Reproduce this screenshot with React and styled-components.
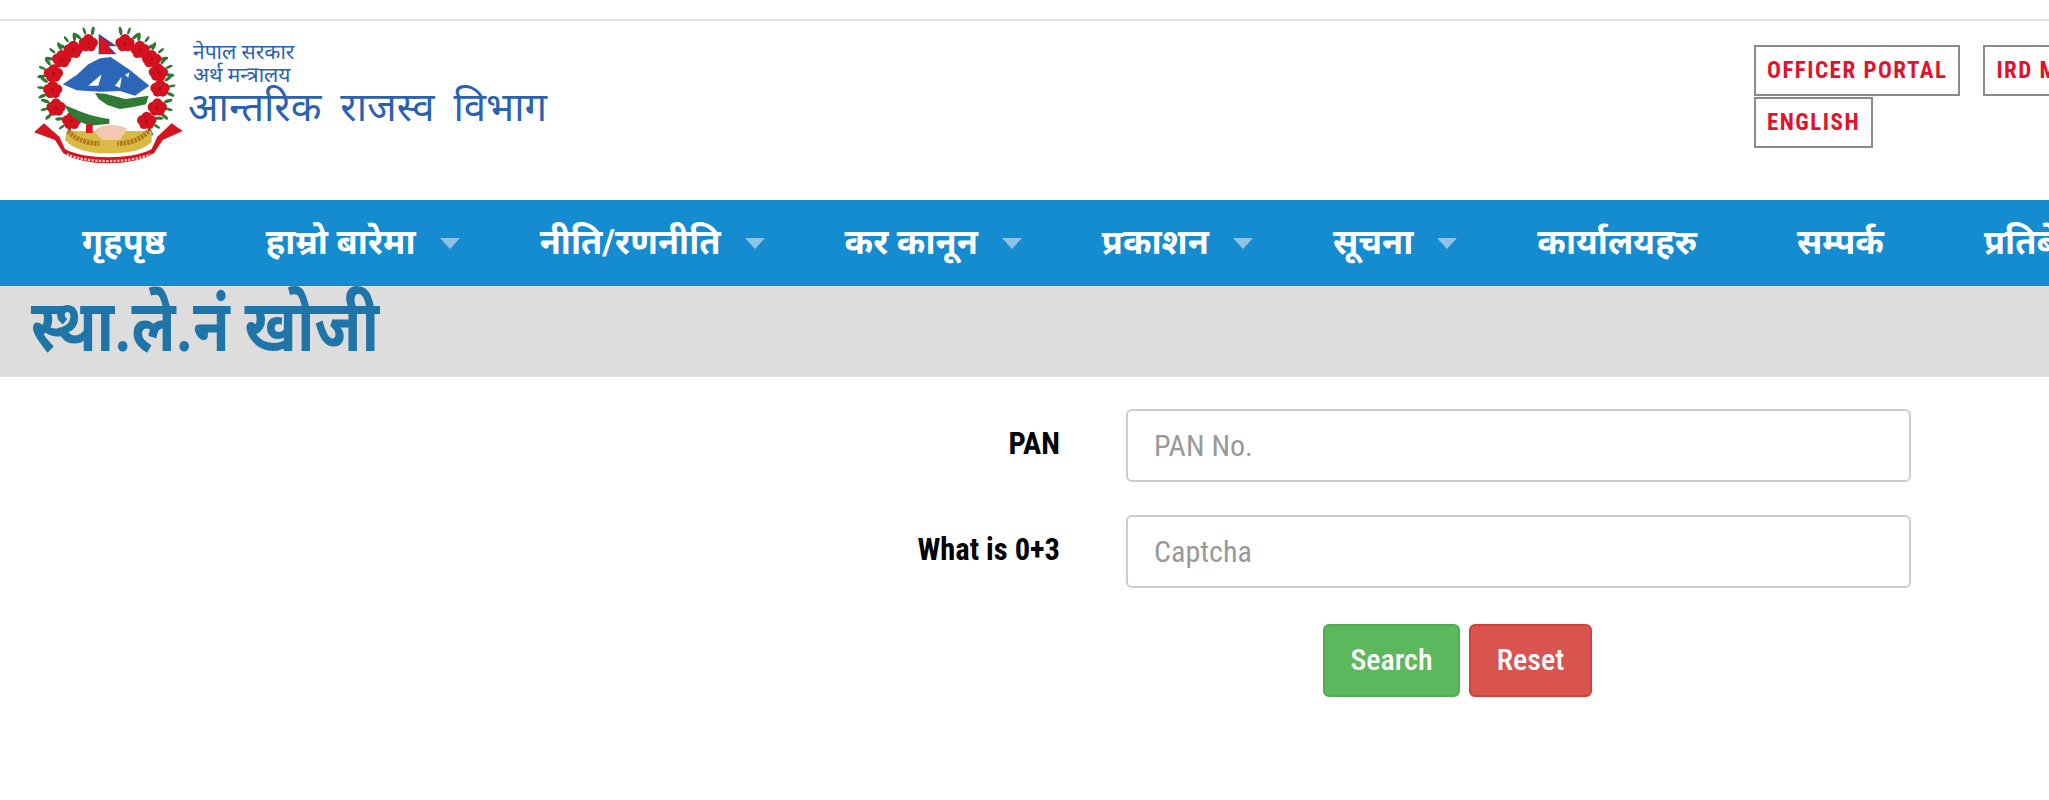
import React from "react";
import styled, { createGlobalStyle } from "styled-components";

const Global = createGlobalStyle`
  html, body { margin: 0; padding: 0; background: #fff; overflow-x: hidden; }
  body { font-family: Roboto, "Noto Sans", "Noto Sans Devanagari", sans-serif; }
`;

const Page = styled.div`
  width: 2049px;
  height: 800px;
  overflow: hidden;
`;

const TopStrip = styled.div`
  height: 19px;
  border-bottom: 2px solid #e4e4e4;
`;

const Header = styled.header`
  height: 179px;
  display: flex;
  align-items: flex-start;
`;

const Brand = styled.div`
  width: 1754px;
  flex: none;
  box-sizing: border-box;
  display: flex;
  padding: 4px 0 0 20px;
`;

const BrandText = styled.div`
  display: flex;
  flex-direction: column;
  color: #2a62b0;
  padding-top: 16px;
`;

const SmallLine = styled.div`
  font-size: 21px;
  line-height: 23px;
  padding-left: 3px;
`;

const BigLine = styled.div`
  font-size: 40px;
  line-height: 42px;
  word-spacing: 9px;
  margin-left: -2px;
`;

const LinkBox = styled.div`
  flex: none;
  width: 360px;
  margin-top: 24px;
  display: flex;
  flex-wrap: wrap;
  column-gap: 23px;
  row-gap: 1px;
`;

const TopLink = styled.a`
  box-sizing: border-box;
  height: 51px;
  padding: 0 11px;
  border: 2px solid #8a8a8a;
  display: flex;
  align-items: center;
  white-space: nowrap;
  color: #e3122c;
  font-weight: 700;
  font-size: 23px;
  letter-spacing: 1.5px;
  font-stretch: condensed;
`;

const Nav = styled.nav`
  height: 86px;
  background: #158bd0;
  display: flex;
  align-items: center;
  padding-left: 32px;
  white-space: nowrap;
`;

const NavItem = styled.a`
  display: flex;
  align-items: center;
  padding: 0 ${(p) => (p.$caret ? 30 : 50)}px 0 50px;
  margin-top: -6px;
  color: #fff;
  font-weight: 700;
  font-size: 34.4px;
  flex: none;
`;

const Caret = styled.span`
  margin-left: 24px;
  margin-top: 6px;
  width: 0;
  height: 0;
  border-left: 10px solid transparent;
  border-right: 10px solid transparent;
  border-top: 11px solid #8cc3e6;
`;

const TitleBand = styled.div`
  height: 91px;
  background: #dddddd;
  padding-left: 31px;
`;

const Title = styled.h1`
  margin: 0;
  color: #1f74a8;
  font-size: 72px;
  line-height: 82px;
  font-weight: 700;
  white-space: nowrap;
  transform: scaleX(0.83);
  transform-origin: left center;
`;

const Form = styled.form`
  padding-top: 32px;
  display: flex;
  flex-direction: column;
  gap: 33px;
`;

const Row = styled.div`
  display: grid;
  grid-template-columns: 1060px 785px;
  column-gap: 66px;
  align-items: center;
`;

const Label = styled.label`
  text-align: right;
  color: #000;
  font-weight: 700;
  font-size: 30.5px;
  font-stretch: condensed;
  padding-bottom: 4px;
`;

const Input = styled.input`
  box-sizing: border-box;
  width: 785px;
  height: 73px;
  border: 2px solid #cccccc;
  border-radius: 6px;
  padding: 0 26px;
  font-family: inherit;
  font-size: 30px;
  font-stretch: condensed;
  outline: none;
  &::placeholder { color: #999; opacity: 1; }
`;

const Actions = styled.div`
  display: flex;
  gap: 9px;
  padding-left: 1323px;
  margin-top: 3px;
`;

const Button = styled.button`
  box-sizing: border-box;
  width: ${(p) => p.$w}px;
  height: 73px;
  border: 2px solid ${(p) => p.$edge};
  border-radius: 6px;
  background: ${(p) => p.$bg};
  color: #fff;
  font-family: inherit;
  font-size: 30px;
  font-weight: 500;
  font-stretch: condensed;
  padding: 0 0 3px;
`;

const flowers = [
  [205, 52], [160, 72], [125, 100], [100, 143], [98, 192], [108, 245], [155, 285],
  [315, 52], [360, 72], [395, 100], [415, 140], [420, 188], [412, 245], [380, 285],
];

function Emblem() {
  return (
    <svg width="170" height="145" viewBox="0 0 510 435" aria-hidden="true">
      <g fill="#2b7a33">
        {flowers.map(([x, y], i) => {
          const a = Math.atan2(y - 210, x - 260) * 57.3;
          return (
            <g key={i} transform={`translate(${x} ${y}) rotate(${a})`}>
              <ellipse cx="28" cy="-24" rx="13" ry="5" transform="rotate(-30 28 -24)" />
              <ellipse cx="28" cy="24" rx="13" ry="5" transform="rotate(30 28 24)" />
              <ellipse cx="36" cy="0" rx="11" ry="4" />
            </g>
          );
        })}
      </g>
      {flowers.map(([x, y], i) => (
        <g key={i} fill="#d3121f">
          <circle cx={x} cy={y - 9} r="16" />
          <circle cx={x - 14} cy={y + 1} r="15" />
          <circle cx={x + 14} cy={y + 1} r="15" />
          <circle cx={x - 8} cy={y + 13} r="14" />
          <circle cx={x + 8} cy={y + 13} r="14" />
          <circle cx={x} cy={y + 3} r="4" fill="#a50c18" />
        </g>
      ))}
      <path d="M238 30 L284 62 L262 62 L285 86 L238 86 Z" fill="#d6141f" stroke="#2a4fa0" strokeWidth="4" />
      <path d="M128 178 L170 150 L205 118 L240 100 L272 96 L330 135 L388 182 L345 212 L300 198 L240 200 L170 196 Z" fill="#2b66b8" />
      <path d="M205 182 L245 148 L235 182 Z M285 182 L305 155 L300 188 Z M315 150 L328 142 L325 158 Z" fill="#fff" />
      <path d="M225 204 L255 206 L285 214 L315 222 L345 218 L386 212 L378 238 L340 246 L300 252 L262 240 L236 222 Z" fill="#2f7a35" />
      <path d="M134 240 C165 252 205 274 268 282 L268 296 L212 302 C172 292 145 270 134 240 Z" fill="#2f7a35" />
      <path d="M140 318 L395 318 L395 350 C370 380 310 385 262 385 C210 385 160 375 135 345 Z" fill="#d8bb45" />
      <path d="M145 318 C165 342 195 354 238 356 M385 318 C365 342 335 354 292 356" stroke="#b5771f" strokeWidth="15" strokeDasharray="8 3" fill="none" />
      <path d="M222 318 C240 295 300 295 322 312 L300 345 L245 345 Z" fill="#f2c9b0" />
      <rect x="198" y="298" width="20" height="26" fill="#d6141f" />
      <path d="M42 322 L72 295 L118 335 L135 372 C190 405 340 405 395 372 L412 335 L455 295 L488 318 L428 345 L402 385 C340 425 190 425 130 385 L105 345 Z" fill="#d6141f" />
      <path d="M140 388 C200 415 330 415 392 388" stroke="#f4c9c0" strokeWidth="7" strokeDasharray="7 4" fill="none" />
    </svg>
  );
}

export default function App() {
  return (
    <Page>
      <Global />
      <TopStrip />
      <Header>
        <Brand>
          <Emblem />
          <BrandText>
            <SmallLine>नेपाल सरकार</SmallLine>
            <SmallLine>अर्थ मन्त्रालय</SmallLine>
            <BigLine>आन्तरिक राजस्व विभाग</BigLine>
          </BrandText>
        </Brand>
        <LinkBox>
          <TopLink>OFFICER PORTAL</TopLink>
          <TopLink>IRD MAIL</TopLink>
          <TopLink>ENGLISH</TopLink>
        </LinkBox>
      </Header>
      <Nav>
        <NavItem>गृहपृष्ठ</NavItem>
        <NavItem $caret>हाम्रो बारेमा<Caret /></NavItem>
        <NavItem $caret>नीति/रणनीति<Caret /></NavItem>
        <NavItem $caret>कर कानून<Caret /></NavItem>
        <NavItem $caret>प्रकाशन<Caret /></NavItem>
        <NavItem $caret>सूचना<Caret /></NavItem>
        <NavItem>कार्यालयहरु</NavItem>
        <NavItem>सम्पर्क</NavItem>
        <NavItem>प्रतिबेदन</NavItem>
      </Nav>
      <TitleBand>
        <Title>स्था.ले.नं खोजी</Title>
      </TitleBand>
      <Form>
        <Row>
          <Label>PAN</Label>
          <Input placeholder="PAN No." />
        </Row>
        <Row>
          <Label>What is 0+3</Label>
          <Input placeholder="Captcha" />
        </Row>
        <Actions>
          <Button type="button" $w={137} $bg="#5cb85c" $edge="#4cae4c">Search</Button>
          <Button type="button" $w={123} $bg="#d9534f" $edge="#d43f3a">Reset</Button>
        </Actions>
      </Form>
    </Page>
  );
}
